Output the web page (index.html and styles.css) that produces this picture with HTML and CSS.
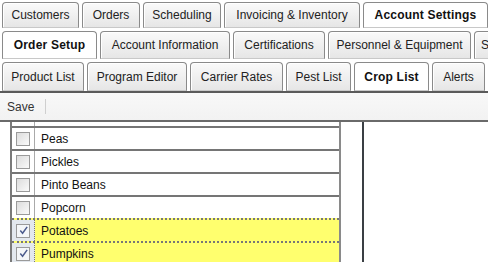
FILE: index.html
```html
<!DOCTYPE html>
<html>
<head>
<meta charset="utf-8">
<link rel="stylesheet" href="styles.css">
</head>
<body>
<div class="tabs">
  <div class="tabrow r1">
    <div class="tab w-customers">Customers</div>
    <div class="tab w-orders">Orders</div>
    <div class="tab w-scheduling">Scheduling</div>
    <div class="tab w-invoicing">Invoicing &amp; Inventory</div>
    <div class="tab active w-account">Account Settings</div>
  </div>
  <div class="tabrow r2">
    <div class="tab active w-ordersetup">Order Setup</div>
    <div class="tab w-accinfo">Account Information</div>
    <div class="tab w-cert">Certifications</div>
    <div class="tab w-personnel">Personnel &amp; Equipment</div>
    <div class="tab left">Scheduling</div>
  </div>
  <div class="tabrow r3">
    <div class="tab w-product">Product List</div>
    <div class="tab w-program">Program Editor</div>
    <div class="tab w-carrier">Carrier Rates</div>
    <div class="tab w-pest">Pest List</div>
    <div class="tab active w-crop">Crop List</div>
    <div class="tab w-alerts">Alerts</div>
  </div>
</div>
<div class="toolbar">
  <span class="tool">Save</span>
  <span class="sep"></span>
</div>
<div class="main">
  <div class="grid">
    <div class="list">
      <div class="row"><div class="chk"></div><div class="name"></div></div>
      <div class="row"><div class="chk"><span class="box"></span></div><div class="name">Peas</div></div>
      <div class="row"><div class="chk"><span class="box"></span></div><div class="name">Pickles</div></div>
      <div class="row"><div class="chk"><span class="box"></span></div><div class="name">Pinto Beans</div></div>
      <div class="row"><div class="chk"><span class="box"></span></div><div class="name">Popcorn</div></div>
      <div class="row sel"><div class="chk"><span class="box"><svg viewBox="0 0 12 12" width="11" height="11"><polyline points="2.5,6 5,9 10,2" fill="none" stroke="#4b5b8c" stroke-width="1.6"/></svg></span></div><div class="name">Potatoes</div></div>
      <div class="row sel"><div class="chk"><span class="box"><svg viewBox="0 0 12 12" width="11" height="11"><polyline points="2.5,6 5,9 10,2" fill="none" stroke="#4b5b8c" stroke-width="1.6"/></svg></span></div><div class="name">Pumpkins</div></div>
    </div>
  </div>
  <div class="gap"></div>
  <div class="pane"></div>
</div>
</body>
</html>
```
FILE: styles.css
```css
html, body {
  margin: 0;
  padding: 0;
  background: #fff;
}
body {
  width: 488px;
  height: 262px;
  overflow: hidden;
  font-family: "Liberation Sans", Arial, sans-serif;
  font-size: 12px;
  color: #222;
}
.tabs {
  border-bottom: 2px solid #5a5a5a;
}
.tabrow {
  display: flex;
  gap: 3px;
  padding-left: 2px;
  overflow: hidden;
  white-space: nowrap;
}
.r1 { margin-top: 2px; height: 26px; }
.r2 { margin-top: 3px; height: 28px; }
.r3 { margin-top: 3px; height: 29px; }
.tab {
  flex: none;
  box-sizing: border-box;
  height: 100%;
  display: flex;
  align-items: center;
  justify-content: center;
  padding: 0 6px;
  border: 1px solid #8a8a8a;
  border-bottom-color: #c8c8c8;
  border-radius: 4px 4px 0 0;
  background: linear-gradient(#fafafa, #e6e6e6);
  box-shadow: inset 1px 1px 0 #fff;
}
.tab.left {
  justify-content: flex-start;
  padding-left: 6px;
}
.tab.active {
  background: #fff;
  font-weight: bold;
  color: #111;
  letter-spacing: 0.2px;
}
.w-customers { width: 77px; }
.w-orders { width: 58px; }
.w-scheduling { width: 78px; }
.w-invoicing { width: 136px; }
.w-account { width: 125px; }
.w-ordersetup { width: 95px; }
.w-accinfo { width: 130px; }
.w-cert { width: 92px; }
.w-personnel { width: 143px; }
.w-product { width: 82px; }
.w-program { width: 100px; }
.w-carrier { width: 93px; }
.w-pest { width: 65px; }
.w-crop { width: 75px; }
.w-alerts { width: 53px; }
.toolbar {
  height: 27px;
  display: flex;
  align-items: center;
  padding-left: 7px;
  background: linear-gradient(#f8f8f8, #f2f2f2);
  border-bottom: 2px solid #6a6a6a;
}
.tool { color: #333; }
.sep {
  width: 1px;
  height: 15px;
  background: #cfcfcf;
  margin-left: 11px;
}
.main {
  display: flex;
  height: 140px;
}
.grid {
  margin-left: 10px;
  width: 327px;
  border-left: 2px solid #7a7a7a;
  border-right: 2px solid #8a8a8a;
  overflow: hidden;
}
.list {
  margin-top: -19px;
}
.row {
  display: flex;
  height: 21px;
  border-top: 2px solid #757575;
  background: #fff;
}
.chk {
  width: 22px;
  flex: none;
  border-right: 1px solid #aaa;
  display: flex;
  align-items: center;
  justify-content: center;
}
.box {
  width: 12px;
  height: 12px;
  border: 1px solid #9a9a9a;
  background: linear-gradient(135deg, #dcdcdc, #fafafa);
  display: flex;
  align-items: center;
  justify-content: center;
}
.name {
  padding-left: 6px;
  display: flex;
  align-items: center;
  color: #111;
}
.row.sel {
  border-top: 2px dotted #777;
  background: #ffff6e;
}
.row.sel .chk {
  background: #e3e8ee;
  border-right: 1px dotted #777;
}
.row.sel .box {
  background: #f4f6f8;
}
.gap {
  width: 21px;
  flex: none;
}
.pane {
  flex: 1;
  border-left: 2px solid #3a3f44;
}
```
